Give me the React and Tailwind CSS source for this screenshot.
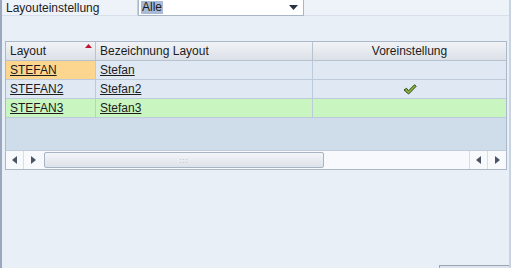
import React from "react";

const rows = [
  { key: "STEFAN", name: "Stefan", def: false, tone: "blue", hot: true },
  { key: "STEFAN2", name: "Stefan2", def: true, tone: "blue" },
  { key: "STEFAN3", name: "Stefan3", def: false, tone: "green" },
];

function Check() {
  return (
    <svg width="14" height="11" viewBox="0 0 14 11">
      <path d="M1 6 L3.5 4.3 L5.5 6.8 L11.5 0.8 L13.2 2.3 L5.6 10 Z" fill="#8db43e" stroke="#2d4610" strokeWidth="1" strokeLinejoin="round" />
    </svg>
  );
}

function Arrows() {
  return (
    <div className="flex h-full">
      <div className="w-[18px] flex items-center justify-center border-r border-[#d4dde8]">
        <svg width="5" height="8" viewBox="0 0 5 8"><path d="M5 0 L0 4 L5 8 Z" fill="#4a5563" /></svg>
      </div>
      <div className="w-[18px] flex items-center justify-center">
        <svg width="5" height="8" viewBox="0 0 5 8"><path d="M0 0 L5 4 L0 8 Z" fill="#4a5563" /></svg>
      </div>
    </div>
  );
}

export default function App() {
  return (
    <div
      className="w-[511px] h-[268px] bg-[#e9eff7] overflow-hidden border-l-2 border-r-2 border-l-[#9aa8bf] border-r-[#c9d3e0] flex flex-col text-[12px] text-[#1c1c1c] relative"
      style={{ fontFamily: '"Liberation Sans", Arial, sans-serif' }}
    >
      {/* selection row */}
      <div className="flex h-[16px] border-b border-[#d6dfea] bg-[#eef3f9]">
        <div className="w-[136px] pl-[4px] leading-[16px] border-r border-[#c5d0dd]">Layouteinstellung</div>
        <div className="w-[166px] h-[16px] bg-white border border-[#a9b6c6] border-t-0 flex items-center pl-[2px] pr-[5px]">
          <span className="bg-[#a8bad6] px-[1px] leading-[13px]">Alle</span>
          <span className="flex-1" />
          <svg width="9" height="5" viewBox="0 0 9 5"><path d="M0 0 H9 L4.5 5 Z" fill="#2a3340" /></svg>
        </div>
      </div>

      {/* table */}
      <div className="mt-[25px] ml-[3px] mr-[2px] border border-[#aab8ca] bg-[#cfdce9] flex flex-col">
        <div className="flex h-[19px] bg-gradient-to-b from-[#f1f3f6] to-[#dce1e8] border-b border-[#b7c2d0]">
          <div className="w-[90px] pl-[4px] leading-[19px] border-r border-[#b9c3cf] relative">
            Layout
            <svg className="absolute right-[3px] top-[2px]" width="7" height="4" viewBox="0 0 7 4"><path d="M0 4 L3.5 0 L7 4 Z" fill="#c4122e" /></svg>
          </div>
          <div className="w-[217px] pl-[4px] leading-[19px] border-r border-[#b9c3cf]">Bezeichnung Layout</div>
          <div className="flex-1 text-center leading-[19px]">Voreinstellung</div>
        </div>
        {rows.map((r) => {
          const bg = r.tone === "green" ? "bg-[#c9f5c1]" : "bg-[#dfe8f3]";
          return (
            <div key={r.key} className={`flex h-[19px] border-b border-[#bccad9] ${bg}`}>
              <div className={`w-[90px] pl-[4px] leading-[18px] border-r border-[#bccad9] ${r.hot ? "bg-[#fcd68e]" : ""}`}>
                <span className="underline">{r.key}</span>
              </div>
              <div className="w-[217px] pl-[4px] leading-[18px] border-r border-[#bccad9]">
                <span className="underline">{r.name}</span>
              </div>
              <div className="flex-1 flex items-center justify-center">{r.def && <Check />}</div>
            </div>
          );
        })}
        <div className="h-[32px]" />
        {/* horizontal scroll bar */}
        <div className="h-[19px] flex bg-[#f7f9fc] border-t border-[#c0ccda]">
          <Arrows />
          <div className="w-[280px] ml-[2px] my-[1px] rounded-[2px] border border-[#a9b4c2] bg-gradient-to-b from-[#f3f5f8] to-[#dde3ea] flex items-center justify-center">
            <span className="text-[7px] leading-none text-[#9aa4b1] tracking-[1px]">:::</span>
          </div>
          <div className="flex-1" />
          <div className="border-l border-[#d4dde8]"><Arrows /></div>
        </div>
      </div>

      <div className="flex-1" />
      <div className="self-end w-[70px] h-[3px] border-t border-l border-[#9aa5b4] bg-[#dde4ee]" />
    </div>
  );
}
